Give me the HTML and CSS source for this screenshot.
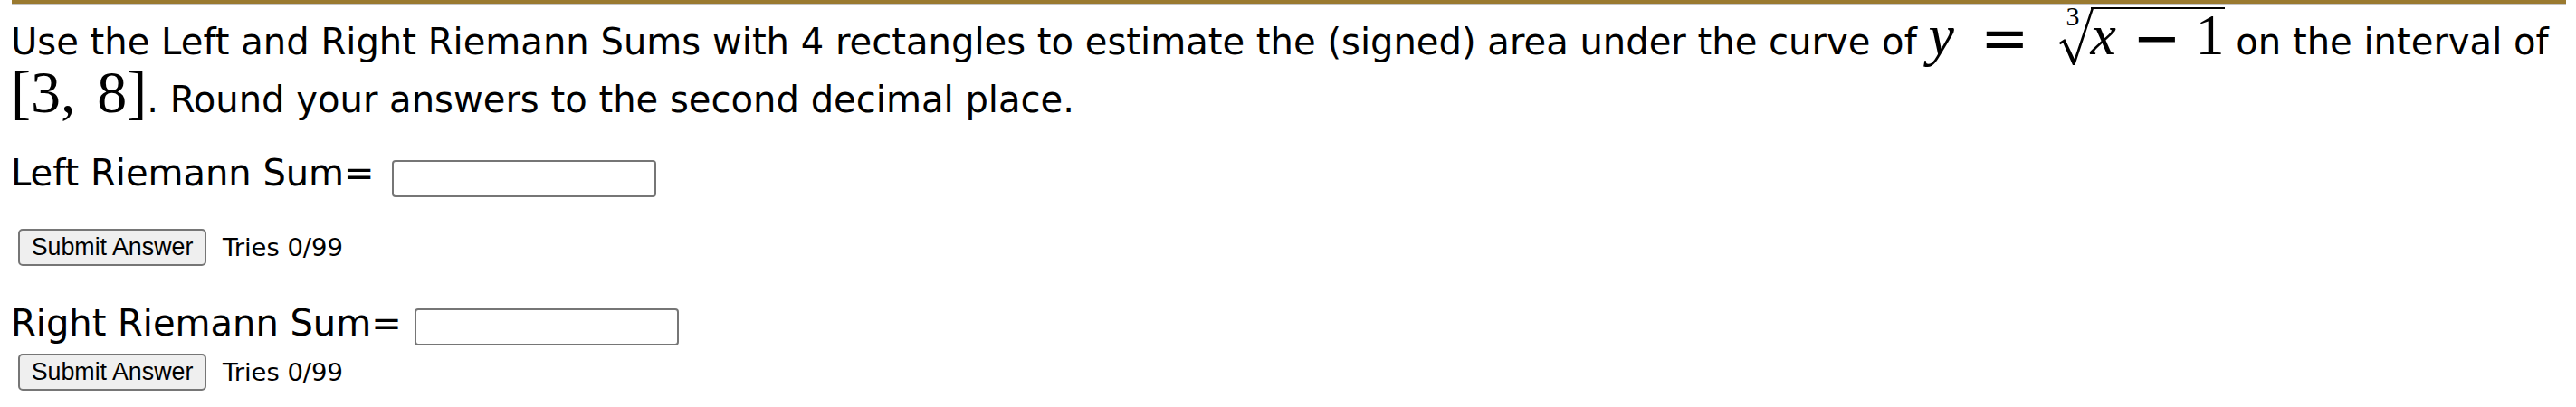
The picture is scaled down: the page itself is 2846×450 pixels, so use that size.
FILE: index.html
```html
<!DOCTYPE html>
<html lang="en">
<head>
<meta charset="utf-8">
<title>Riemann Sums</title>
<link rel="stylesheet" href="styles.css">
</head>
<body>
<div class="page">
  <div class="topbar"></div>
  <p class="question">Use the Left and Right Riemann Sums with 4 rectangles to estimate the (signed) area under the curve of <span class="math"><span class="mi">y</span><span class="mo rel">=</span><span class="root"><svg class="rad" width="38" height="64" viewBox="0 0 38 64"><path d="M0,39 L6.3,35 L16.8,57 L35.9,0 L38,0 L38,1.6 L17.4,64 L15,64 L4.4,39.6 L1,41.2 Z" fill="#000"/></svg><span class="idx">3</span><span class="radicand"><span class="mi">x</span><span class="mo bin">−</span><span class="mn">1</span></span></span></span> on the interval of <span class="math interval">[3,<span class="thin"></span>8]</span>. Round your answers to the second decimal place.</p>
  <div class="answer-row">
    <span class="label">Left Riemann Sum=</span>
    <input class="answer" type="text">
  </div>
  <div class="submit-row">
    <button class="submit" type="button">Submit Answer</button>
    <span class="tries">Tries 0/99</span>
  </div>
  <div class="answer-row second">
    <span class="label">Right Riemann Sum=</span>
    <input class="answer" type="text">
  </div>
  <div class="submit-row second">
    <button class="submit" type="button">Submit Answer</button>
    <span class="tries">Tries 0/99</span>
  </div>
</div>
</body>
</html>
```

FILE: styles.css
```css
html, body {
  margin: 0;
  padding: 0;
  background: #ffffff;
}

body {
  font-family: "DejaVu Sans", Verdana, sans-serif;
  color: #000000;
}

.page {
  padding: 0 11px 0 12px;
}

.topbar {
  height: 0;
  margin-left: 1px;
  border-top: 4px solid #9a7a30;
  border-bottom: 2px solid #c4c4c4;
}

.question {
  margin: 0;
  padding-top: 2px;
  font-size: 40.1px;
  line-height: 64px;
}

.math {
  font-family: "Liberation Serif", "Times New Roman", serif;
  font-size: 64px;
  line-height: 0;
  white-space: nowrap;
}

.mi {
  font-style: italic;
}

.mo {
  font-family: "DejaVu Sans", sans-serif;
  vertical-align: -4px;
}

.mo.rel {
  margin: 0 33px 0 29px;
}

.mo.bin {
  margin: 0 16px 0 18px;
}

.root {
  white-space: nowrap;
}

.rad {
  vertical-align: -12px;
}

.idx {
  font-size: 30px;
  vertical-align: 32px;
  margin-left: -30px;
  margin-right: 15px;
}

.radicand {
  display: inline-block;
  margin-left: -3px;
  padding-right: 0;
  border-top: 2px solid #000;
  line-height: 58px;
}

.interval {
  font-size: 66px;
}

.thin {
  display: inline-block;
  width: 0.36em;
}

.answer-row {
  display: flex;
  align-items: flex-start;
  margin-top: 21px;
}

.answer-row.second {
  margin-top: 39.5px;
}

.label {
  font-size: 40px;
  line-height: 47px;
  margin-top: 5px;
}

.answer-row.second .label {
  margin-top: 0;
}

.answer {
  box-sizing: border-box;
  width: 292px;
  height: 41px;
  margin: 14px 0 0 19px;
  padding: 0 6px;
  border: 2px solid #767676;
  border-radius: 4px;
  background: #ffffff;
  font-family: "DejaVu Sans", sans-serif;
  font-size: 26px;
}

.answer-row.second .answer {
  margin: 7px 0 0 14px;
}

.submit-row {
  display: flex;
  align-items: center;
  margin-top: 35px;
}

.submit-row.second {
  margin-top: 9.5px;
}

.submit {
  box-sizing: border-box;
  width: 208px;
  height: 41px;
  margin: 0 0 0 8px;
  padding: 0;
  border: 2px solid #767676;
  border-radius: 5px;
  background: #efefef;
  color: #000;
  font-family: "Liberation Sans", Arial, sans-serif;
  font-size: 26.8px;
}

.tries {
  margin-left: 18px;
  font-size: 27.4px;
}
```
